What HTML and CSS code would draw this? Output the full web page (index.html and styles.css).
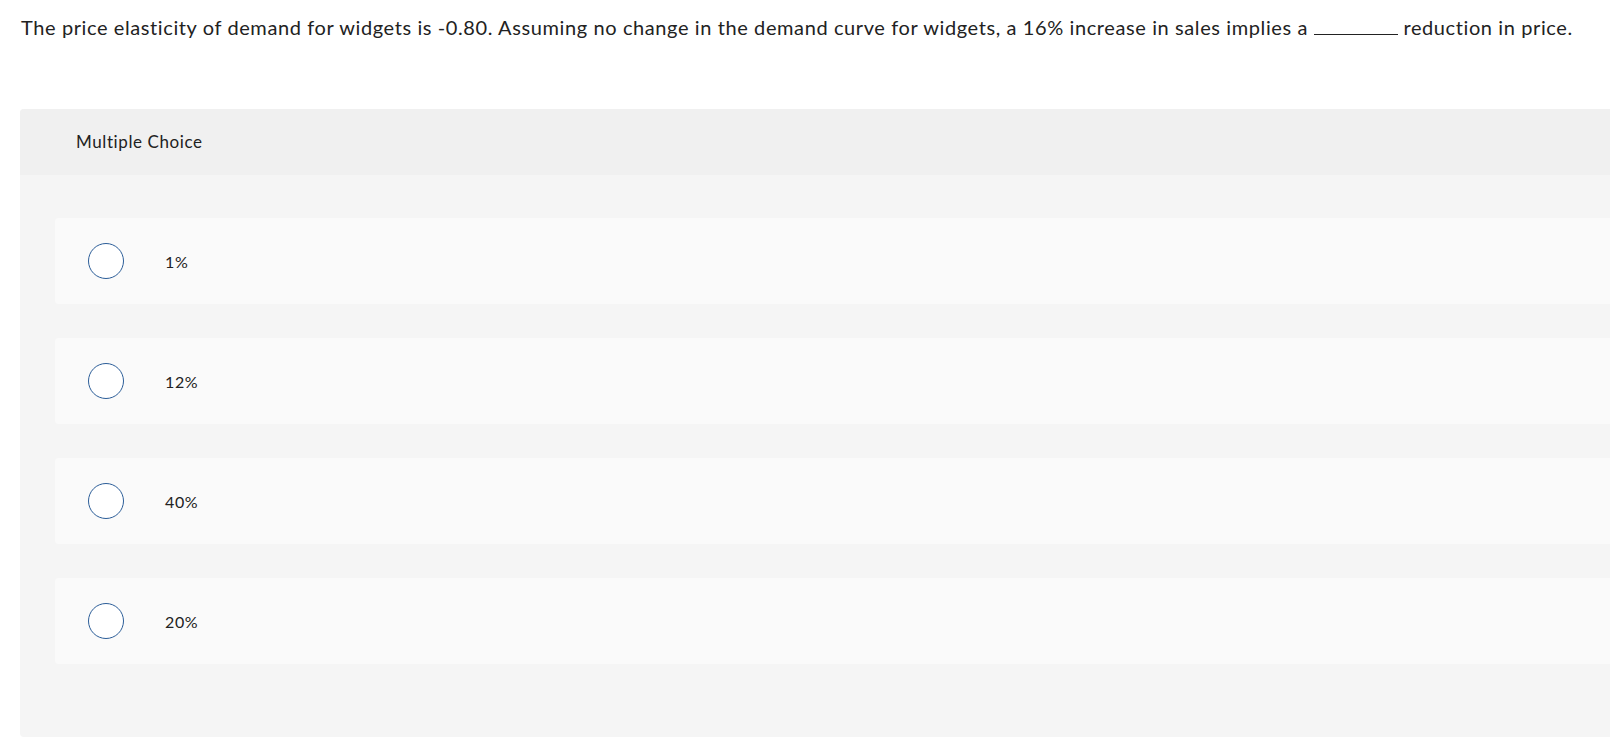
FILE: index.html
```html
<!DOCTYPE html>
<html lang="en">
<head>
    <meta charset="UTF-8">
    <title>Multiple Choice</title>
    <link rel="stylesheet" href="styles.css">
</head>
<body>
    <p class="question">The price elasticity of demand for widgets is -0.80. Assuming no change in the demand curve for widgets, a 16% increase in sales implies a <span class="blank"></span> reduction in price.</p>

    <div class="panel">
        <div class="panel-header">Multiple Choice</div>
        <div class="panel-body">
            <label class="option">
                <span class="radio"></span>
                <span class="option-text">1%</span>
            </label>
            <label class="option">
                <span class="radio"></span>
                <span class="option-text">12%</span>
            </label>
            <label class="option">
                <span class="radio"></span>
                <span class="option-text">40%</span>
            </label>
            <label class="option">
                <span class="radio"></span>
                <span class="option-text">20%</span>
            </label>
        </div>
    </div>
</body>
</html>
```

FILE: styles.css
```css
body {
    margin: 0;
    padding: 0;
    background-color: #fff;
    font-family: Lato, "Open Sans", sans-serif;
    color: #222;
    overflow: hidden;
}
.question {
    margin: 0;
    padding: 15px 0 0 21px;
    font-size: 20px;
    line-height: 24px;
    letter-spacing: 0.6px;
    white-space: nowrap;
}
.blank {
    display: inline-block;
    width: 84px;
    border-bottom: 1px solid #222;
    vertical-align: baseline;
}
.panel {
    margin: 70px 0 0 20px;
    width: 1640px;
    background-color: #f5f5f5;
    border-radius: 4px;
}
.panel-header {
    background-color: #f0f0f0;
    border-radius: 4px 4px 0 0;
    height: 66px;
    line-height: 66px;
    padding-left: 56px;
    font-size: 17px;
    letter-spacing: 0.6px;
}
.panel-body {
    padding: 43px 0 73px 35px;
    display: flex;
    flex-direction: column;
    gap: 34px;
}
.option {
    display: flex;
    align-items: center;
    height: 86px;
    background-color: #fafafa;
    border-radius: 4px;
    padding-left: 33px;
    cursor: pointer;
}
.radio {
    width: 34px;
    height: 34px;
    border: 1px solid #2b5d98;
    border-radius: 50%;
    background-color: #fff;
    flex-shrink: 0;
}
.option-text {
    margin-left: 41px;
    font-size: 16px;
    letter-spacing: 0.6px;
}
```
